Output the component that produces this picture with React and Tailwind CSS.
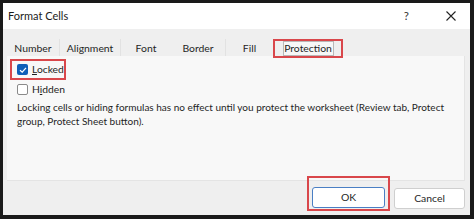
import React from "react";

export default function App() {
  const font = { fontFamily: 'Lato, "Noto Sans", sans-serif' };
  return (
    <div className="w-[474px] h-[219px] bg-[#1a1a1a] pt-[3px] pl-[3px] overflow-hidden" style={font}>
      <div className="w-[467px] h-[212px] bg-[#efefef] flex flex-col">
        {/* title bar */}
        <div className="h-[26px] bg-white flex items-center pl-[5px] text-[11px] text-[#1b1b1b] shrink-0">
          <span>Format Cells</span>
          <span className="ml-auto mr-[37px] text-[11.5px] text-[#333]">?</span>
          <svg width="10" height="10" viewBox="0 0 10 10" className="mr-[14px]">
            <path d="M0.5 0.5L9.5 9.5M9.5 0.5L0.5 9.5" stroke="#222" strokeWidth="1.1" />
          </svg>
        </div>
        {/* tabs */}
        <div className="h-[27px] flex items-start pt-[10px] text-[10.4px] text-[#1f1f1f] pl-[4px] shrink-0 whitespace-nowrap">
          <div className="w-[52px] h-[19px] flex items-center justify-center">Number</div>
          <div className="w-px h-[19px] bg-[#e2e2e2]" />
          <div className="w-[60px] h-[19px] flex items-center justify-center">Alignment</div>
          <div className="w-px h-[19px] bg-[#e2e2e2]" />
          <div className="w-[50px] h-[19px] flex items-center justify-center">Font</div>
          <div className="w-[54px] h-[19px] flex items-center justify-center">Border</div>
          <div className="w-px h-[19px] bg-[#e2e2e2]" />
          <div className="w-[47px] h-[19px] flex items-center justify-center">Fill</div>
          <div className="relative z-10 w-[70px] h-[19px] border-2 border-[#d9474b] flex items-center justify-center">
            <div className="w-[51px] h-[15px] border border-[#b8b8b8] bg-[#f7f7f7] flex items-center justify-center leading-none">
              Protection
            </div>
          </div>
        </div>
        {/* panel */}
        <div className="ml-[4px] mr-[5px] h-[125px] bg-[#f8f8f8] border-r border-b border-[#e4e4e4] shrink-0 pl-[3px] pt-[3px] text-[10px] text-[#1f1f1f] whitespace-nowrap">
          <div className="w-[56px] h-[21px] border-2 border-[#d9474b] flex items-center pl-[5px] gap-[4px]">
            <div className="w-[11px] h-[11px] rounded-[2px] bg-[#0f5fb8] flex items-center justify-center">
              <svg width="8" height="8" viewBox="0 0 8 8">
                <path d="M1 4.2L3.2 6.2L7 1.8" stroke="white" strokeWidth="1.2" fill="none" />
              </svg>
            </div>
            <span className="leading-none text-[10.3px]"><span className="underline">L</span>ocked</span>
          </div>
          <div className="flex items-center pl-[7px] gap-[4px] h-[18px]">
            <div className="w-[11px] h-[11px] rounded-[2px] border border-[#8a8a8a] bg-white" />
            <span className="leading-none text-[10.3px]">H<span className="underline">i</span>dden</span>
          </div>
          <div className="pl-[7px] mt-[2px] leading-[14px]">
            Locking cells or hiding formulas has no effect until you protect the worksheet (Review tab, Protect
            <br />
            group, Protect Sheet button).
          </div>
        </div>
        {/* buttons */}
        <div className="flex justify-end items-start mr-[5px] mt-[-5px] text-[10.4px] text-[#1f1f1f]">
          <div className="w-[83px] h-[35px] border-2 border-[#d9474b] flex items-end justify-center pb-[1px]">
            <div className="w-[73px] h-[21px] rounded-[3px] bg-white border border-[#4a7fc4] flex items-center justify-center">
              OK
            </div>
          </div>
          <div className="ml-[4px] mt-[12px] w-[71px] h-[21px] rounded-[3px] bg-white border border-[#cfcfcf] flex items-center justify-center">
            Cancel
          </div>
        </div>
      </div>
    </div>
  );
}
